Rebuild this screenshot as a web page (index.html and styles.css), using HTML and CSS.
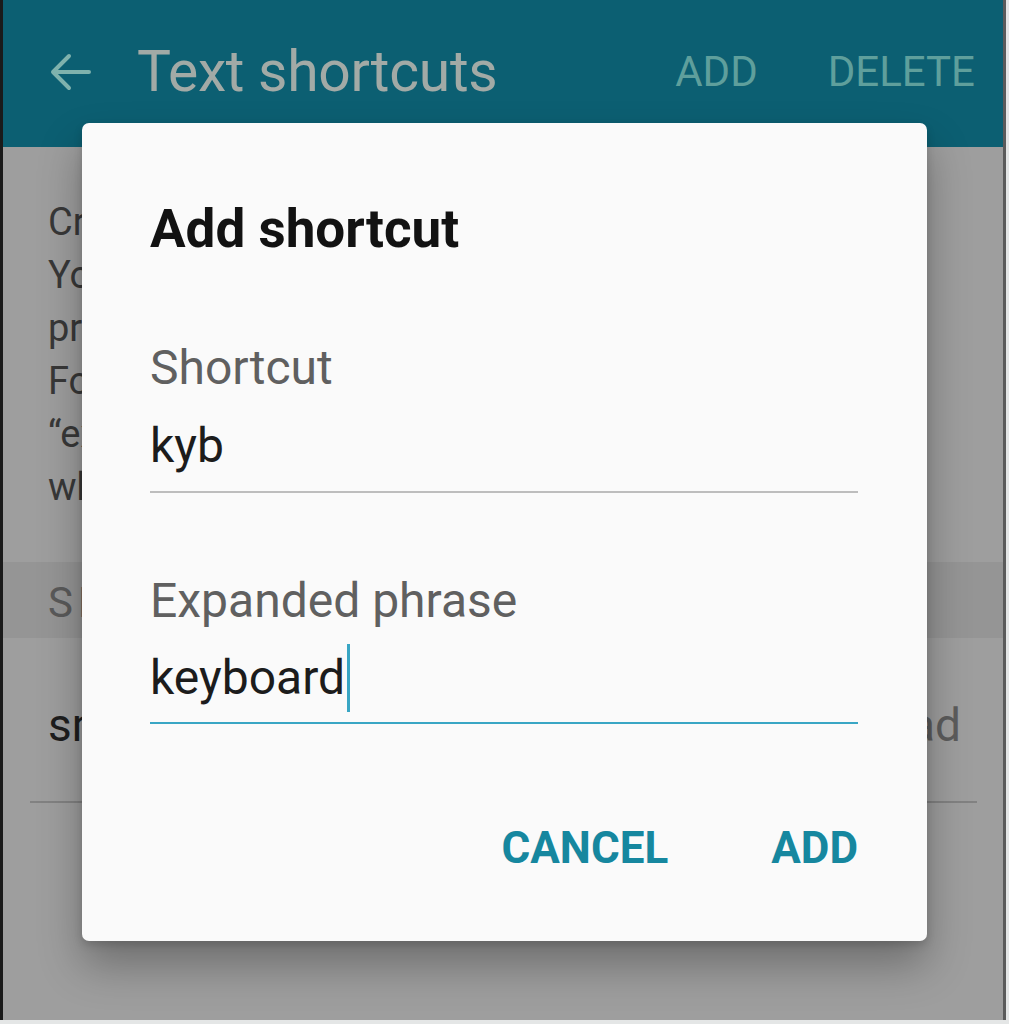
FILE: index.html
```html
<!DOCTYPE html>
<html lang="en">
<head>
    <meta charset="UTF-8">
    <meta name="viewport" content="width=device-width, initial-scale=1.0">
    <title>Text shortcuts</title>
    <link rel="stylesheet" href="styles.css">
</head>
<body>
    <div class="screen">
        <div class="app-bar">
            <svg class="back-icon" width="44" height="44" viewBox="0 0 44 44">
                <path d="M41 22 H5 M21 6 L5 22 L21 38" fill="none" stroke="#7fb2ad" stroke-width="4" stroke-linecap="round" stroke-linejoin="round"/>
            </svg>
            <div class="app-title">Text shortcuts</div>
            <div class="app-actions">
                <span class="action">ADD</span>
                <span class="action">DELETE</span>
            </div>
        </div>

        <div class="page">
            <div class="intro">
                <p>Create shortcuts for phrases.</p>
                <p>You can use shortcuts with</p>
                <p>predictive text.</p>
                <p>For example, add “ex” for</p>
                <p>“example”. It will appear</p>
                <p>when you type “ex”.</p>
            </div>
            <div class="section-head">SHORTCUTS</div>
            <div class="shortcut-row">
                <span class="shortcut-key">smh</span>
                <span class="shortcut-phrase">shaking my head</span>
            </div>
        </div>

        <!-- add shortcut popup over the list -->
        <div class="dialog">
            <h2 class="dialog-title">Add shortcut</h2>

            <div class="field">
                <div class="field-label">Shortcut</div>
                <div class="field-input">kyb</div>
            </div>

            <div class="field focused">
                <div class="field-label">Expanded phrase</div>
                <div class="field-input">keyboard<span class="caret"></span></div>
            </div>

            <div class="dialog-buttons">
                <button class="dialog-btn">CANCEL</button>
                <button class="dialog-btn">ADD</button>
            </div>
        </div>
    </div>
</body>
</html>
```

FILE: styles.css
```css
* {
    margin: 0;
    padding: 0;
    box-sizing: border-box;
}

body {
    background-color: #e4e6e6;
    font-family: Roboto, "Noto Sans", Arial, sans-serif;
}

.screen {
    position: relative;
    width: 1006px;
    height: 1020px;
    border-left: 3px solid #1a1a1a;
    border-right: 3px solid #5b5b5b;
    background-color: #9e9e9e;
    overflow: hidden;
}

/* top bar */
.app-bar {
    height: 147px;
    background-color: #0c5f72;
    display: flex;
    align-items: center;
    padding: 0 28px 4px 45px;
}

.back-icon {
    flex: none;
}

.app-title {
    margin-left: 45px;
    font-size: 57px;
    color: #a2aaa6;
    letter-spacing: -0.3px;
}

.app-actions {
    margin-left: auto;
    display: flex;
    gap: 70px;
}

.action {
    font-size: 42px;
    color: #5f9f9c;
}

/* list behind the popup */
.page {
    padding-top: 49px;
}

.intro {
    padding: 0 45px;
    margin-bottom: 48px;
}

.intro p {
    font-size: 38px;
    line-height: 53px;
    color: #383838;
    white-space: nowrap;
}

.section-head {
    height: 76px;
    display: flex;
    align-items: center;
    padding: 4px 0 0 45px;
    background-color: #959595;
    font-size: 42px;
    letter-spacing: 5px;
    color: #5a5a5a;
}

.shortcut-row {
    height: 165px;
    margin: 0 26px 0 27px;
    border-bottom: 2px solid #828282;
    display: flex;
    align-items: center;
    justify-content: space-between;
    padding: 10px 16px 0 18px;
    font-size: 46px;
}

.shortcut-key {
    color: #1e1e1e;
}

.shortcut-phrase {
    color: #5c5c5c;
}

/* popup */
.dialog {
    position: absolute;
    left: 79px;
    top: 123px;
    width: 845px;
    height: 818px;
    background-color: #fafafa;
    border-radius: 7px;
    padding: 74px 69px 0 68px;
    box-shadow: 0 24px 44px rgba(0, 0, 0, 0.3), 0 4px 8px rgba(0, 0, 0, 0.15);
}

.dialog-title {
    font-size: 53px;
    line-height: 64px;
    font-weight: bold;
    color: #121212;
}

.field {
    margin-top: 79px;
    border-bottom: 2px solid #bdbdbd;
    padding-bottom: 17px;
}

.field + .field {
    margin-top: 80px;
}

.field-label {
    font-size: 48px;
    line-height: 56px;
    color: #606060;
}

.field-input {
    margin-top: 22px;
    font-size: 48px;
    line-height: 56px;
    color: #1c1c1c;
    display: flex;
    align-items: center;
}

.focused {
    border-bottom-color: #39a6c4;
    padding-bottom: 16px;
}

.focused .field-input {
    margin-top: 21px;
}

.caret {
    width: 3px;
    height: 68px;
    margin: -6px 0 -6px 2px;
    background-color: #39a6c4;
}

.dialog-buttons {
    margin-top: 98px;
    display: flex;
    justify-content: flex-end;
    gap: 103px;
}

.dialog-btn {
    border: none;
    background: none;
    font-family: inherit;
    font-size: 44px;
    line-height: 52px;
    font-weight: bold;
    color: #16879f;
    cursor: pointer;
}
```
